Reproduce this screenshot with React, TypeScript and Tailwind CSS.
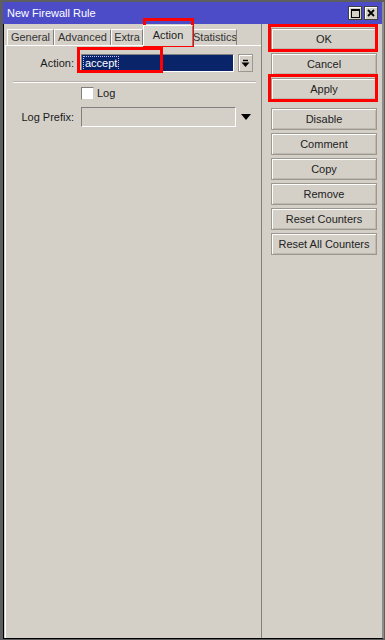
const tabs = [
  { label: "General", w: "w-[47px]" },
  { label: "Advanced", w: "w-[57px]" },
  { label: "Extra", w: "w-[32px]" },
];

const topButtons = ["OK", "Cancel", "Apply"];
const bottomButtons = ["Disable", "Comment", "Copy", "Remove", "Reset Counters", "Reset All Counters"];

function Btn({ label }: { label: string }) {
  return (
    <div className="flex h-[22px] w-[106px] items-center justify-center border border-[#9c9890] bg-[#d4d0c8] text-[#222] shadow-[inset_1px_1px_0_#ffffff,inset_-1px_-1px_0_#bdb9b1]">
      {label}
    </div>
  );
}

export default function App() {
  return (
    <div className="relative h-[640px] w-[385px] overflow-hidden bg-[#5e5e5e] pl-[3px] pr-[1px] pt-[2px] font-['Liberation_Sans',Arial,sans-serif] text-[11px] leading-none text-[#1a1a1a]">
      <div className="flex h-[637px] flex-col border-b border-r-2 border-b-black border-r-[#8c8c8c] bg-[#d4d0c8]">
        {/* ------- TITLE BAR ------- */}
        <div className="flex h-[22px] items-center justify-between bg-[#4c4cc9] pl-[4px] pr-[4px]">
          <span className="text-white">New Firewall Rule</span>
          <div className="flex gap-[2px]">
            <div className="flex h-[14px] w-[14px] items-center justify-center border border-[#404040] bg-[#d4d0c8] shadow-[inset_1px_1px_0_#ffffff]">
              <div className="h-[9px] w-[9px] border border-t-2 border-black" />
            </div>
            <div className="flex h-[14px] w-[14px] items-center justify-center border border-[#404040] bg-[#d4d0c8] shadow-[inset_1px_1px_0_#ffffff]">
              <svg width="8" height="8" viewBox="0 0 8 8">
                <path d="M1 1L7 7M7 1L1 7" stroke="black" strokeWidth="1.8" />
              </svg>
            </div>
          </div>
        </div>

        {/* ------- BODY ------- */}
        <div className="flex flex-1 border-l border-black">
          {/* tab area */}
          <div className="flex w-[258px] flex-col border-r border-[#808080]">
            <div className="flex h-[21px] items-end pl-[3px]">
              {tabs.map((t) => (
                <div
                  key={t.label}
                  className={`flex h-[16px] ${t.w} items-center justify-center overflow-hidden whitespace-nowrap border-l border-r border-t border-l-white border-r-[#808080] border-t-white text-[#333]`}
                >
                  {t.label}
                </div>
              ))}
              <div className="relative z-10 -mb-px flex h-[21px] w-[50px] items-center justify-center border-l border-r border-t border-l-white border-r-[#808080] border-t-white bg-[#d8d5ce] pb-[2px] text-[#222]">
                Action
              </div>
              <div className="flex h-[16px] w-[44px] items-center overflow-hidden whitespace-nowrap border-r border-t border-r-[#808080] border-t-white text-[#333]">
                Statistics
              </div>
            </div>

            <div className="ml-px flex-1 border-l border-t border-white pt-[8px]">
              {/* Action row */}
              <div className="flex items-center">
                <div className="mr-[7px] w-[68px] text-right">Action:</div>
                <div className="flex h-[18px] w-[153px] items-center border border-b-white border-l-[#808080] border-r-white border-t-[#808080] bg-[#0a246a] pl-[1px]">
                  <span className="border border-dotted border-[#c0c0ff] px-px py-[1px] text-white">accept</span>
                </div>
                <div className="ml-[4px] flex h-[18px] w-[15px] items-center justify-center border border-[#9c9890] shadow-[inset_1px_1px_0_#ffffff]">
                  <svg width="9" height="9" viewBox="0 0 9 9">
                    <path d="M2 1.5H7" stroke="black" strokeWidth="1.4" />
                    <path d="M0.5 3.5H8.5L4.5 8Z" fill="black" />
                  </svg>
                </div>
              </div>

              {/* separator */}
              <div className="ml-[7px] mr-[5px] mt-[9px] h-[2px] border-b border-t border-b-white border-t-[#b4b0a8]" />

              {/* Log checkbox */}
              <div className="ml-[75px] mt-[4px] flex items-center">
                <div className="h-[13px] w-[13px] border border-b-[#d4d0c8] border-l-[#808080] border-r-[#d4d0c8] border-t-[#808080] bg-white" />
                <span className="ml-[3px]">Log</span>
              </div>

              {/* Log Prefix row */}
              <div className="mt-[7px] flex items-center">
                <div className="mr-[7px] w-[68px] text-right">Log Prefix:</div>
                <div className="h-[20px] w-[155px] border border-b-white border-l-[#808080] border-r-white border-t-[#808080] bg-[#d4d0c8]" />
                <svg className="ml-[5px]" width="10" height="6" viewBox="0 0 10 6">
                  <path d="M0 0H10L5 6Z" fill="black" />
                </svg>
              </div>
            </div>
          </div>

          {/* buttons */}
          <div className="flex flex-1 flex-col pl-[9px] pt-[4px]">
            <div className="flex flex-col gap-[3px]">
              {topButtons.map((b) => (
                <Btn key={b} label={b} />
              ))}
            </div>
            <div className="mt-[8px] flex flex-col gap-[3px]">
              {bottomButtons.map((b) => (
                <Btn key={b} label={b} />
              ))}
            </div>
          </div>
        </div>
      </div>

      {/* ------- RED ANNOTATIONS ------- */}
      <div className="absolute left-[143px] top-[18px] h-[29px] w-[51px] border-[3px] border-[#ff0000]" />
      <div className="absolute left-[77px] top-[47px] h-[26px] w-[86px] border-[3px] border-[#ff0000]" />
      <div className="absolute left-[268px] top-[24px] h-[28px] w-[110px] border-[3px] border-[#ff0000]" />
      <div className="absolute left-[268px] top-[74px] h-[28px] w-[110px] border-[3px] border-[#ff0000]" />
    </div>
  );
}
